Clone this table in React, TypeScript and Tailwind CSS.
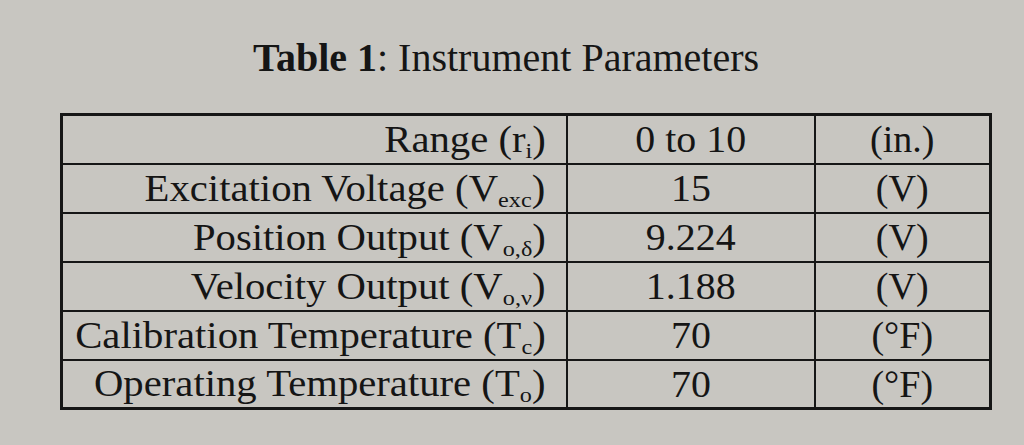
import React from 'react';

const rows: { name: string; sym: string; sub: string; value: string; unit: string }[] = [
  { name: 'Range', sym: 'r', sub: 'i', value: '0 to 10', unit: '(in.)' },
  { name: 'Excitation Voltage', sym: 'V', sub: 'exc', value: '15', unit: '(V)' },
  { name: 'Position Output', sym: 'V', sub: 'o,δ', value: '9.224', unit: '(V)' },
  { name: 'Velocity Output', sym: 'V', sub: 'o,ν', value: '1.188', unit: '(V)' },
  { name: 'Calibration Temperature', sym: 'T', sub: 'c', value: '70', unit: '(°F)' },
  { name: 'Operating Temperature', sym: 'T', sub: 'o', value: '70', unit: '(°F)' },
];

export default function App() {
  return (
    <div
      className="w-[1024px] h-[445px] overflow-hidden bg-[#c8c6c1] text-[#151515] pt-[38px]"
      style={{ fontFamily: '"Liberation Serif", "Times New Roman", serif' }}
    >
      {/* Caption */}
      <div className="flex justify-center h-[75px]">
        <p className="text-[40px] leading-none ml-[-12px]">
          <span className="font-bold">Table 1</span>: Instrument Parameters
        </p>
      </div>

      {/* Table */}
      <table className="ml-[60px] w-[932px] border-collapse border-[3px] border-[#161616]">
        <tbody>
          {rows.map(r => (
            <tr key={r.name} className="h-[49px]">
              <td className="w-[505px] border-[2px] border-[#161616] text-right pr-[20px] text-[37px] leading-none whitespace-nowrap">
                <span className="inline-block origin-right scale-x-[1.1]">
                  {r.name} ({r.sym}
                  <sub className="text-[22px] align-baseline relative top-[6px]">{r.sub}</sub>)
                </span>
              </td>
              <td className="w-[248px] border-[2px] border-[#161616] text-center text-[38px] leading-none">
                <span className="inline-block scale-x-[1.05]">{r.value}</span>
              </td>
              <td className="border-[2px] border-[#161616] text-center text-[38px] leading-none">{r.unit}</td>
            </tr>
          ))}
        </tbody>
      </table>
    </div>
  );
}
